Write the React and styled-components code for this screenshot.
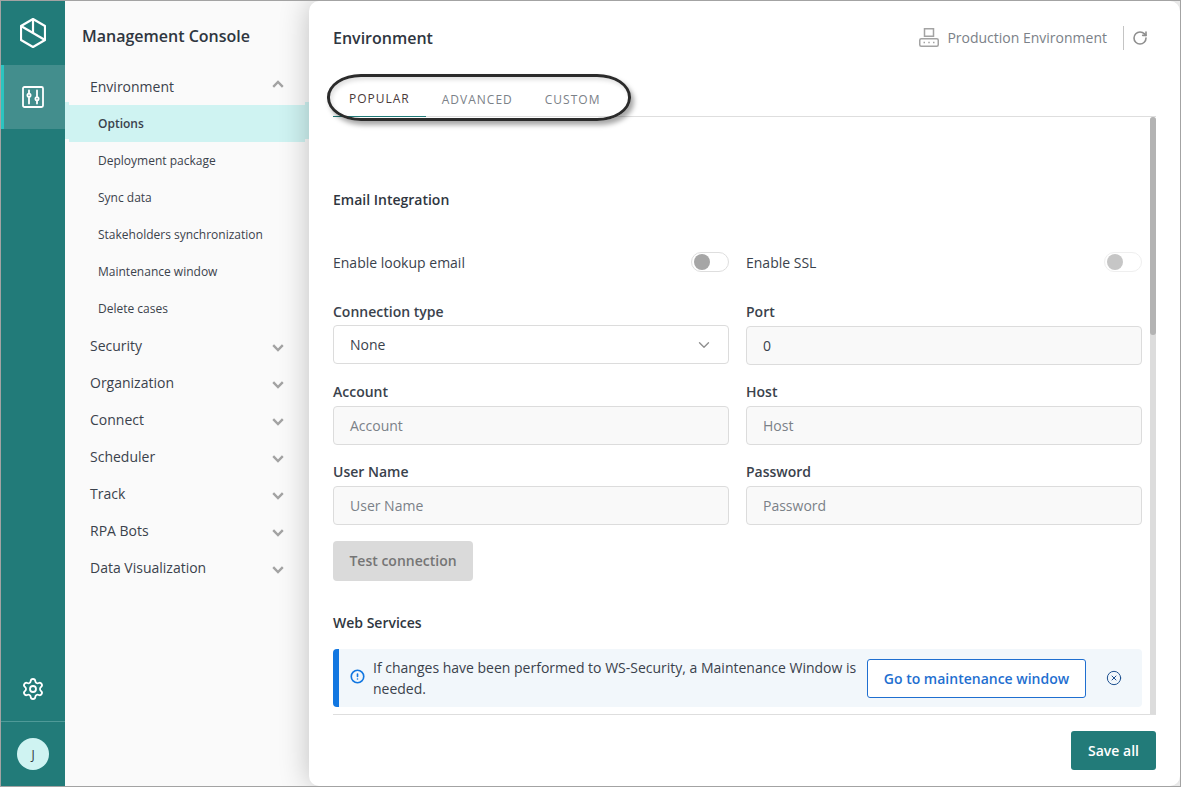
import React from 'react';
import styled, { createGlobalStyle } from 'styled-components';
import { ChevronDown, CircleAlert, CircleX, RotateCw, Settings } from 'lucide-react';

const Global = createGlobalStyle`
  html, body { margin: 0; padding: 0; overflow: hidden; background: #fff; }
  * { box-sizing: border-box; }
  body { font-family: "Open Sans", "Liberation Sans", sans-serif; color: #2f3640; }
`;

const Page = styled.div`
  position: relative;
  width: 1181px;
  height: 787px;
  display: flex;
  border: 1px solid #a3a3a3;
  background: #fafafa;
  overflow: hidden;
`;

const Rail = styled.aside`
  width: 64px;
  flex: none;
  display: flex;
  flex-direction: column;
  background: #227b79;
  color: #fff;
`;

const RailLogo = styled.div`
  height: 64px;
  display: flex;
  align-items: center;
  justify-content: center;
`;

const RailItem = styled.div`
  height: 64px;
  display: flex;
  align-items: center;
  justify-content: center;
  background: #438e8d;
  border-left: 3px solid #2cc4c0;
  padding-right: 3px;
`;

const RailSpacer = styled.div`
  flex: 1;
`;

const RailGear = styled.div`
  height: 64px;
  display: flex;
  align-items: center;
  justify-content: center;
  padding-bottom: 1px;
  border-bottom: 1px solid #4f9a98;
`;

const RailUser = styled.div`
  height: 64px;
  display: flex;
  align-items: center;
  justify-content: center;
`;

const Avatar = styled.div`
  width: 32px;
  height: 32px;
  border-radius: 50%;
  background: #cff3f2;
  color: #2f3640;
  font-size: 12px;
  display: flex;
  align-items: center;
  justify-content: center;
`;

const Nav = styled.nav`
  width: 244px;
  flex: none;
`;

const NavTitle = styled.h1`
  margin: 0;
  height: 67px;
  padding: 22px 0 0 17px;
  font-size: 16px;
  line-height: 26px;
  font-weight: 600;
  color: #2f3640;
`;

const NavGroup = styled.div`
  height: 37px;
  display: flex;
  align-items: center;
  justify-content: space-between;
  padding: 0 25px;
  font-size: 14px;
  color: #3a424c;
`;

const Chevron = styled.svg`
  width: 12px;
  height: 8px;
  fill: none;
  stroke: #a3a3a3;
  stroke-width: 2.4;
  transform: ${p => (p.$up ? 'translateY(-3px) rotate(180deg)' : 'translateY(2px)')};
`;

const NavSub = styled.div`
  position: relative;
  height: 37px;
  display: flex;
  align-items: center;
  padding-left: 33px;
  font-size: 12px;
  font-weight: ${p => (p.$active ? 600 : 400)};
  color: #3a424c;
  background: ${p => (p.$active ? '#cff3f2' : 'transparent')};

  /* the selected row's ends sit 3px higher in the capture */
  ${p => p.$active && `
    background: linear-gradient(#cff3f2, #cff3f2) center / calc(100% - 8px) 100% no-repeat;
    &::before, &::after {
      content: '';
      position: absolute;
      top: -3px;
      width: 4px;
      height: 37px;
      background: #cff3f2;
    }
    &::before { left: 0; }
    &::after { right: 0; }
  `}
`;

const Main = styled.main`
  position: relative;
  z-index: 1;
  flex: 1;
  min-width: 0;
  display: flex;
  flex-direction: column;
  padding: 0 24px 16px;
  background: #fff;
  border-radius: 10px;
  box-shadow: 0 0 30px rgba(0, 0, 0, 0.24);
`;

const Header = styled.header`
  height: 73px;
  flex: none;
  display: flex;
  align-items: center;
  justify-content: space-between;
`;

const PageTitle = styled.h2`
  margin: 0;
  font-size: 16px;
  font-weight: 600;
  color: #2f3640;
`;

const EnvInfo = styled.div`
  display: flex;
  align-items: center;
  gap: 8px;
  padding-right: 8px;
  font-size: 14px;
  color: #7b8188;
`;

const Refresh = styled.div`
  height: 24px;
  display: flex;
  align-items: center;
  margin-left: 8px;
  padding-left: 8px;
  border-left: 1px solid #c4c4c4;
  color: #8f8f8f;
`;

const Tabs = styled.div`
  height: 43px;
  flex: none;
  display: flex;
  border-bottom: 1px solid #dedede;
`;

const Tab = styled.div`
  height: ${p => (p.$active ? '43px' : '42px')};
  padding: ${p => (p.$active ? '16px' : '17px')} 16px 0;
  font-size: 12px;
  line-height: 17px;
  letter-spacing: 1px;
  color: ${p => (p.$active ? '#4a3a3a' : '#7b8188')};
  border-bottom: ${p => (p.$active ? '1px solid #227b79' : 'none')};
`;

const ScrollArea = styled.div`
  flex: 1;
  min-height: 0;
  display: flex;
  gap: 8px;
  border-bottom: 1px solid #dedede;
`;

const Form = styled.div`
  width: 809px;
  flex: none;
`;

const Scrollbar = styled.div`
  width: 6px;
  flex: none;
  background: #dcdcdc;
  border-radius: 3px 3px 0 0;
`;

const ScrollThumb = styled.div`
  height: 218px;
  background: #b3b3b3;
  border-radius: 3px;
`;

const SectionTitle = styled.h3`
  margin: 0;
  padding-top: ${p => p.$top}px;
  font-size: 14px;
  line-height: 20px;
  font-weight: 600;
  color: #2f3640;
`;

const Grid = styled.div`
  display: grid;
  grid-template-columns: 396px 396px;
  column-gap: 17px;
`;

const ToggleRow = styled(Grid)`
  margin-top: 42px;
  margin-bottom: 30px;
`;

const ToggleField = styled.div`
  height: 20px;
  display: flex;
  align-items: center;
  justify-content: space-between;
  font-size: 14px;
  color: #3a424c;
`;

const Toggle = styled.div`
  width: 38px;
  height: 20px;
  padding: 1px 2px;
  border: 1px solid ${p => (p.$disabled ? '#efefef' : '#dedede')};
  border-radius: 10px;
  background: #fff;
`;

const Knob = styled.div`
  width: 16px;
  height: 16px;
  border-radius: 50%;
  background: ${p => (p.$disabled ? '#c6c6c6' : '#a6a6a6')};
`;

const Field = styled.div`
  height: 80px;
`;

const Label = styled.label`
  display: block;
  height: 24px;
  font-size: 14px;
  line-height: 20px;
  font-weight: 600;
  color: #3a424c;
`;

const Input = styled.div`
  height: 39px;
  display: flex;
  align-items: center;
  padding: 0 16px;
  font-size: 14px;
  color: ${p => (p.$filled ? '#3a424c' : '#7b8188')};
  background: #f9f9f9;
  border: 1px solid #dcdcdc;
  border-radius: 4px;
`;

const Select = styled(Input)`
  justify-content: space-between;
  padding-right: 15px;
  background: #fff;
  color: #3a424c;
  margin-top: -1px;
  svg { color: #8f8f8f; }
`;

const TestButton = styled.div`
  width: 140px;
  height: 40px;
  margin-top: -1px;
  padding-bottom: 2px;
  display: flex;
  align-items: center;
  justify-content: center;
  border-radius: 4px;
  background: #dadada;
  color: #757575;
  font-size: 14px;
  font-weight: 600;
`;

const Alert = styled.div`
  height: 58px;
  margin-top: 16px;
  display: flex;
  align-items: center;
  padding: 0 16px 0 11px;
  border-left: 6px solid #1277e1;
  border-radius: 4px;
  background: #f2f7fb;
  font-size: 14px;
  line-height: 21px;
  color: #3a424c;
`;

const AlertIcon = styled.div`
  width: 23px;
  flex: none;
  display: flex;
  margin-top: -3px;
  color: #1277e1;
`;

const AlertText = styled.p`
  width: 494px;
  flex: none;
  margin: 0;
`;

const OutlineButton = styled.div`
  width: 219px;
  height: 39px;
  flex: none;
  display: flex;
  align-items: center;
  justify-content: center;
  border: 1px solid #1f6fd0;
  border-radius: 3px;
  background: #fff;
  color: #1f6fd0;
  font-size: 14px;
  font-weight: 600;
`;

const AlertClose = styled.div`
  display: flex;
  margin-left: 20px;
  color: #1c4f8f;
`;

const Footer = styled.footer`
  height: 55px;
  flex: none;
  display: flex;
  align-items: flex-end;
  justify-content: flex-end;
`;

const SaveButton = styled.div`
  width: 85px;
  height: 39px;
  display: flex;
  align-items: center;
  justify-content: center;
  border-radius: 3px;
  background: #227b79;
  color: #fff;
  font-size: 14px;
  font-weight: 600;
`;

// hand annotation drawn on top of the screenshot
const Callout = styled.div`
  position: absolute;
  left: 326px;
  top: 73px;
  width: 304px;
  height: 47px;
  z-index: 2;
  border: 3px solid #2b2b2b;
  border-radius: 34px / 23px;
  box-shadow: 3px 4px 5px rgba(0, 0, 0, 0.35), inset 2px 3px 4px rgba(0, 0, 0, 0.12);
  pointer-events: none;
`;

const LogoIcon = () => (
  <svg width="26" height="30" viewBox="0 0 26 30" fill="none" stroke="#fff" strokeWidth="2.2" strokeLinejoin="round">
    <path d="M13 1 25 8v14l-12 7-12-7V8Z" />
    <path d="M1 8 25 22" />
    <path d="M13 1v14" />
  </svg>
);

const SlidersIcon = () => (
  <svg width="22" height="22" viewBox="0 0 22 22" fill="none" stroke="#fff" strokeWidth="1.8" strokeLinecap="round">
    <rect x="1" y="1" width="20" height="20" rx="1.5" />
    <path d="M7 4.5v2.5M7 11.5v6M15 4.5v6M15 15v2.5" />
    <circle cx="7" cy="9.2" r="1.6" />
    <circle cx="15" cy="12.8" r="1.6" />
  </svg>
);

const ServerIcon = () => (
  <svg width="20" height="19" viewBox="0 0 20 19" fill="none" stroke="#a3a3a3" strokeWidth="1.5">
    <rect x="5.5" y="0.75" width="9" height="7.5" />
    <rect x="0.75" y="10.75" width="18.5" height="7.5" rx="1.5" />
    <path d="M4.5 14.5h1.5M9.25 14.5h1.5M14 14.5h1.5" strokeWidth="1.6" />
  </svg>
);

const Caret = ({ up }) => (
  <Chevron $up={up} viewBox="0 0 12 8">
    <path d="M1.2 1.2 6 6l4.8-4.8" />
  </Chevron>
);

const groups = ['Security', 'Organization', 'Connect', 'Scheduler', 'Track', 'RPA Bots', 'Data Visualization'];
const subItems = ['Deployment package', 'Sync data', 'Stakeholders synchronization', 'Maintenance window', 'Delete cases'];

export default function App() {
  return (
    <Page>
      <Global />
      <Rail>
        <RailLogo><LogoIcon /></RailLogo>
        <RailItem><SlidersIcon /></RailItem>
        <RailSpacer />
        <RailGear><Settings size={24} strokeWidth={1.8} /></RailGear>
        <RailUser><Avatar>J</Avatar></RailUser>
      </Rail>

      <Nav>
        <NavTitle>Management Console</NavTitle>
        <NavGroup>Environment<Caret up /></NavGroup>
        <NavSub $active>Options</NavSub>
        {subItems.map(item => <NavSub key={item}>{item}</NavSub>)}
        {groups.map(group => (
          <NavGroup key={group}>{group}<Caret /></NavGroup>
        ))}
      </Nav>

      <Main>
        <Header>
          <PageTitle>Environment</PageTitle>
          <EnvInfo>
            <ServerIcon />
            Production Environment
            <Refresh><RotateCw size={16} strokeWidth={2.4} /></Refresh>
          </EnvInfo>
        </Header>

        <Tabs>
          <Tab $active>POPULAR</Tab>
          <Tab>ADVANCED</Tab>
          <Tab>CUSTOM</Tab>
        </Tabs>

        <ScrollArea>
          <Form>
            <SectionTitle $top={73}>Email Integration</SectionTitle>
            <ToggleRow>
              <ToggleField>Enable lookup email<Toggle><Knob /></Toggle></ToggleField>
              <ToggleField>Enable SSL<Toggle $disabled><Knob $disabled /></Toggle></ToggleField>
            </ToggleRow>
            <Grid>
              <Field>
                <Label>Connection type</Label>
                <Select>None<ChevronDown size={18} strokeWidth={1.8} /></Select>
              </Field>
              <Field>
                <Label>Port</Label>
                <Input $filled>0</Input>
              </Field>
              <Field>
                <Label>Account</Label>
                <Input>Account</Input>
              </Field>
              <Field>
                <Label>Host</Label>
                <Input>Host</Input>
              </Field>
              <Field>
                <Label>User Name</Label>
                <Input>User Name</Input>
              </Field>
              <Field>
                <Label>Password</Label>
                <Input>Password</Input>
              </Field>
            </Grid>
            <TestButton>Test connection</TestButton>
            <SectionTitle $top={32}>Web Services</SectionTitle>
            <Alert>
              <AlertIcon><CircleAlert size={15} strokeWidth={2.6} /></AlertIcon>
              <AlertText>If changes have been performed to WS-Security, a Maintenance Window is needed.</AlertText>
              <OutlineButton>Go to maintenance window</OutlineButton>
              <AlertClose><CircleX size={16} strokeWidth={1.5} /></AlertClose>
            </Alert>
          </Form>
          <Scrollbar><ScrollThumb /></Scrollbar>
        </ScrollArea>

        <Footer><SaveButton>Save all</SaveButton></Footer>
      </Main>

      <Callout />
    </Page>
  );
}
